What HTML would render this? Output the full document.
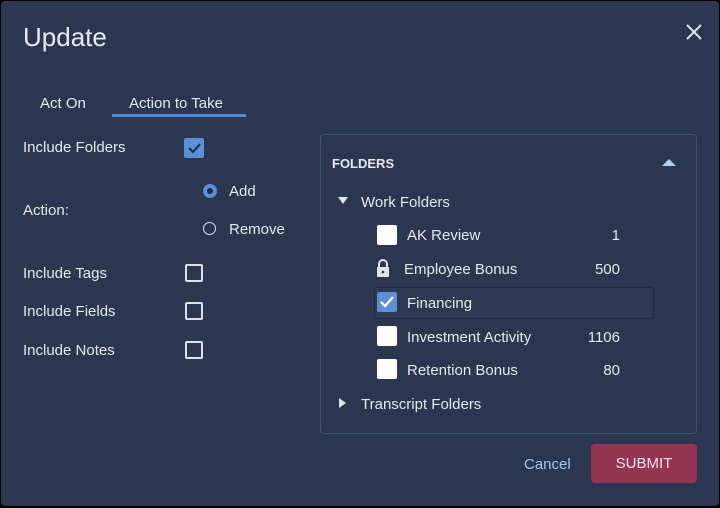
<!DOCTYPE html><html><head><style>
body{margin:0;width:720px;height:508px;background:#000;overflow:hidden;font-family:"Liberation Sans",sans-serif;}
.d{position:absolute;left:1px;top:1px;width:718px;height:505px;background:#2b3650;border-radius:4px;color:#e6e8ee;}
.t{position:absolute;white-space:nowrap;font-size:15px;}
.n{position:absolute;white-space:nowrap;font-size:15px;right:99px;}
.cb{position:absolute;width:18px;height:18px;box-sizing:border-box;border:2px solid #dfe2e8;border-radius:2px;}
.cbc{background:#5b8fd6;border:none;}
.w{position:absolute;width:20px;height:20px;background:#fff;border-radius:2px;}
</style></head><body><div class="d">
<div class="t" style="left:22px;top:21px;font-size:26px;color:#e8eaef">Update</div>
<svg style="position:absolute;left:685px;top:23px" width="16" height="16"><path d="M1 1L15 15M15 1L1 15" stroke="#e0e3ea" stroke-width="2"/></svg>
<div class="t" style="left:39px;top:94px">Act On</div>
<div class="t" style="left:128px;top:94px">Action to Take</div>
<div style="position:absolute;left:111px;top:113px;width:134px;height:3px;background:#4f8ad6"></div>
<div class="t" style="left:22px;top:138px">Include Folders</div>
<div class="cb cbc" style="left:183px;top:137px;width:20px;height:20px"><svg width="20" height="20"><path d="M5 10l4 4 7-8" stroke="#1f2a40" stroke-width="2" fill="none"/></svg></div>
<div class="t" style="left:22px;top:201px">Action:</div>
<div style="position:absolute;left:202px;top:183px;width:14px;height:14px;border-radius:50%;background:#5b8fd6"><div style="position:absolute;left:4px;top:4px;width:6px;height:6px;border-radius:50%;background:#1f2a40"></div></div>
<div class="t" style="left:228px;top:182px">Add</div>
<div style="position:absolute;left:202px;top:221px;width:11px;height:11px;border-radius:50%;border:1.5px solid #dfe2e8"></div>
<div class="t" style="left:228px;top:220px">Remove</div>
<div class="t" style="left:22px;top:264px">Include Tags</div>
<div class="cb" style="left:184px;top:263px"></div>
<div class="t" style="left:22px;top:302px">Include Fields</div>
<div class="cb" style="left:184px;top:301px"></div>
<div class="t" style="left:22px;top:341px">Include Notes</div>
<div class="cb" style="left:184px;top:340px"></div>
<div style="position:absolute;left:319px;top:133px;width:375px;height:298px;border:1px solid #3e5272;border-radius:4px"></div>
<div class="t" style="left:331px;top:155px;font-size:13px;font-weight:bold">FOLDERS</div>
<svg style="position:absolute;left:661px;top:157px" width="14" height="8"><path d="M0 8L7 1L14 8Z" fill="#b3cdef"/></svg>
<svg style="position:absolute;left:337px;top:196px" width="10" height="8"><path d="M0 0H10L5 7Z" fill="#e0e3ea"/></svg>
<div class="t" style="left:360px;top:193px">Work Folders</div>
<div class="w" style="left:376px;top:224px"></div>
<div class="t" style="left:406px;top:226px">AK Review</div>
<div class="n" style="top:226px">1</div>
<svg style="position:absolute;left:375px;top:257px" width="14" height="20"><path d="M3 9V6a4 4 0 0 1 8 0v3" stroke="#e0e3ea" stroke-width="2" fill="none"/><rect x="1" y="9" width="12" height="10" rx="1" fill="#e0e3ea"/><circle cx="7" cy="14" r="1.3" fill="#2b3650"/></svg>
<div class="t" style="left:403px;top:260px">Employee Bonus</div>
<div class="n" style="top:260px">500</div>
<div style="position:absolute;left:373px;top:286px;width:278px;height:30px;border:1px solid #1f2940;border-radius:3px;background:#2d3853"></div>
<div class="cb cbc" style="left:376px;top:291px;width:20px;height:20px"><svg width="20" height="20"><path d="M4 10l4 4 8-9" stroke="#fff" stroke-width="2.4" fill="none"/></svg></div>
<div class="t" style="left:406px;top:294px">Financing</div>
<div class="w" style="left:376px;top:325px"></div>
<div class="t" style="left:406px;top:328px">Investment Activity</div>
<div class="n" style="top:328px">1106</div>
<div class="w" style="left:376px;top:358px"></div>
<div class="t" style="left:406px;top:361px">Retention Bonus</div>
<div class="n" style="top:361px">80</div>
<svg style="position:absolute;left:338px;top:397px" width="8" height="10"><path d="M0 0V10L7 5Z" fill="#e0e3ea"/></svg>
<div class="t" style="left:360px;top:395px">Transcript Folders</div>
<div class="t" style="left:523px;top:455px;color:#a9c4ea">Cancel</div>
<div style="position:absolute;left:590px;top:443px;width:106px;height:39px;background:#933552;border-radius:4px;text-align:center;line-height:39px;font-size:15px;color:#f3e6ea">SUBMIT</div>
</div></body></html>
